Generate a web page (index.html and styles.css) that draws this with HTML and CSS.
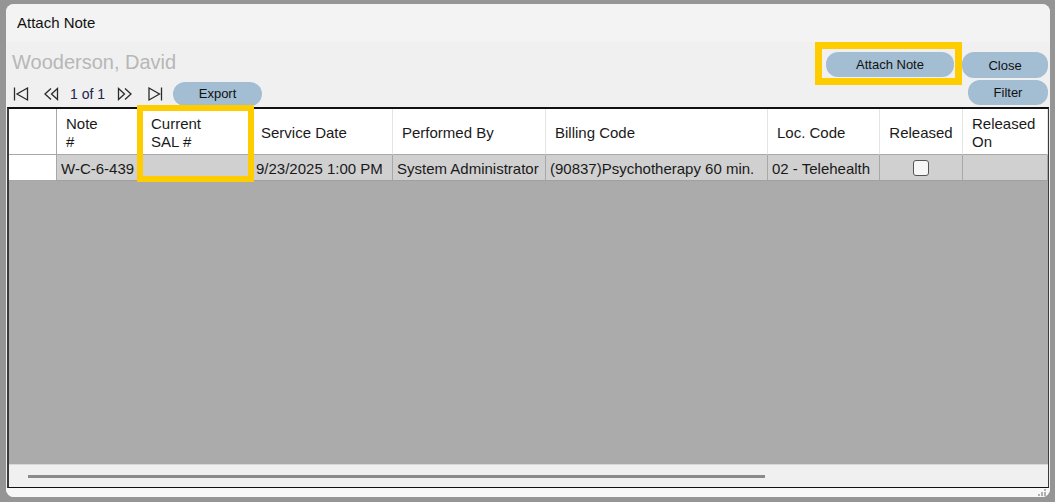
FILE: index.html
```html
<!DOCTYPE html>
<html lang="en">
<head>
	<meta charset="UTF-8">
	<title>Attach Note</title>
	<link rel="stylesheet" href="styles.css">
</head>
<body>
	<div class="window">
		<div class="title-bar">Attach Note</div>
		<div class="top-area">
			<div class="left-col">
				<div class="client-name">Wooderson, David</div>
				<div class="nav-row">
					<svg class="nav-icon" viewBox="0 0 16 16"><path d="M1.5 1.5v13M14.5 2L4 8l10.5 6z"/></svg>
					<svg class="nav-icon icon-prev" viewBox="0 0 16 16"><path d="M14.5 2.5v11L8.5 8zM8 2.5L2 8l6 5.5"/></svg>
					<span class="page-text">1 of 1</span>
					<svg class="nav-icon icon-next" viewBox="0 0 16 16"><path d="M1.5 2.5v11L7.5 8zM8 2.5L14 8l-6 5.5"/></svg>
					<svg class="nav-icon icon-last" viewBox="0 0 16 16"><path d="M14.5 1.5v13M2 2l10.5 6L2 14z"/></svg>
					<button class="blue-button export-button">Export</button>
				</div>
			</div>
			<div class="right-cluster">
				<div class="highlight-box">
					<button class="blue-button attach-button">Attach Note</button>
				</div>
				<div class="side-buttons">
					<button class="blue-button close-button">Close</button>
					<button class="blue-button filter-button">Filter</button>
				</div>
			</div>
		</div>
		<div class="grid-box">
			<div class="grid-table">
				<div class="cell row-head head-row"></div>
				<div class="cell head-cell">Note<br>#</div>
				<div class="cell head-cell sal-head">Current<br>SAL #</div>
				<div class="cell head-cell">Service Date</div>
				<div class="cell head-cell">Performed By</div>
				<div class="cell head-cell">Billing Code</div>
				<div class="cell head-cell">Loc. Code</div>
				<div class="cell head-cell head-center">Released</div>
				<div class="cell head-cell">Released<br>On</div>

				<div class="cell row-head"></div>
				<div class="cell data-cell">W-C-6-439</div>
				<div class="cell data-cell"></div>
				<div class="cell data-cell">9/23/2025 1:00 PM</div>
				<div class="cell data-cell">System Administrator</div>
				<div class="cell data-cell">(90837)Psychotherapy 60 min.</div>
				<div class="cell data-cell">02 - Telehealth</div>
				<div class="cell data-cell data-center"><span class="check-box"></span></div>
				<div class="cell data-cell"></div>
			</div>
			<div class="grid-empty"></div>
			<div class="h-scroll"><div class="h-thumb"></div></div>
			<div class="sal-highlight"></div>
		</div>
		<div class="bottom-strip">
			<svg class="grip" viewBox="0 0 10 8"><path d="M7 1h2v2H7zM4 4h2v2H4zM7 4h2v2H7zM1 6h2v2H1zM4 6h2v2H4zM7 6h2v2H7z"/></svg>
		</div>
	</div>
</body>
</html>
```

FILE: styles.css
```css
* {
	box-sizing: border-box;
}
body {
	margin: 0;
	padding: 4px 5px 5px 6px;
	background-color: #959595;
	font-family: "Liberation Sans", Arial, sans-serif;
	color: #1a1a1a;
}
.window {
	width: 1044px;
	height: 493px;
	background-color: #f0f0f0;
	border-radius: 8px;
	overflow: hidden;
	display: flex;
	flex-direction: column;
}
.title-bar {
	height: 38px;
	line-height: 38px;
	padding-left: 11px;
	background-color: #f3f3f3;
	font-size: 15px;
	color: #111111;
}
.top-area {
	height: 65px;
	display: flex;
	justify-content: space-between;
	padding-right: 2px;
}
.left-col {
	padding-top: 8px;
}
.client-name {
	padding-left: 6px;
	height: 24px;
	line-height: 24px;
	font-size: 20px;
	color: #b7b7b7;
}
.nav-row {
	margin-top: 7px;
	padding-left: 7px;
	display: flex;
	align-items: center;
	height: 25px;
}
.nav-icon {
	width: 16px;
	height: 16px;
	fill: none;
	stroke: #2a2a2a;
	stroke-width: 1.3;
	stroke-linejoin: miter;
}
.icon-prev {
	margin-left: 14px;
}
.page-text {
	margin-left: 11px;
	font-size: 14px;
	color: #22224e;
}
.icon-next {
	margin-left: 12px;
}
.icon-last {
	margin-left: 14px;
}
.blue-button {
	background-color: #a3bdd3;
	border: none;
	border-radius: 12px;
	font-family: "Liberation Sans", Arial, sans-serif;
	font-size: 13px;
	color: #111111;
	padding: 0;
	cursor: default;
}
.export-button {
	margin-left: 10px;
	width: 89px;
	height: 24px;
}
.right-cluster {
	display: flex;
	align-items: flex-start;
}
.highlight-box {
	width: 147px;
	height: 43px;
	border: 7px solid #ffcc00;
	padding: 3px 1px 1px 4px;
}
.attach-button {
	width: 128px;
	height: 25px;
}
.side-buttons {
	display: flex;
	flex-direction: column;
	align-items: flex-end;
	margin-top: 10px;
}
.close-button {
	width: 86px;
	height: 26px;
}
.filter-button {
	margin-top: 2px;
	width: 80px;
	height: 25px;
}
.grid-box {
	position: relative;
	height: 381px;
	margin-left: 1px;
	margin-right: 1px;
	border-top: 2px solid #111111;
	border-left: 2px solid #3a3a3a;
	border-right: 1px solid #3a3a3a;
	border-bottom: 1px solid #111111;
	display: flex;
	flex-direction: column;
	background-color: #ababab;
}
.grid-table {
	display: grid;
	grid-template-columns: 48px 81px 114px 141px 153px 222px 112px 83px 85px;
	grid-template-rows: 46px 26px;
	font-size: 15px;
}
.cell {
	display: flex;
	align-items: center;
	white-space: nowrap;
	overflow: hidden;
	padding-top: 2px;
}
.row-head {
	background-color: #ffffff;
	border-right: 1px solid #a8a8a8;
	border-bottom: 1px solid #a8a8a8;
}
.head-cell {
	background-color: #ffffff;
	padding-left: 9px;
	line-height: 18px;
	border-right: 1px solid #e4e4e4;
	border-bottom: 1px solid #a8a8a8;
}
.head-cell.sal-head {
	padding-left: 13px;
}
.head-center {
	justify-content: center;
	padding-left: 0;
}
.data-cell {
	background-color: #d0d0d0;
	padding-left: 4px;
	border-right: 1px solid #a8a8a8;
	border-bottom: 1px solid #a0a0a0;
}
.data-center {
	justify-content: center;
	padding-left: 0;
	padding-top: 0;
}
.check-box {
	width: 16px;
	height: 16px;
	border: 1px solid #555555;
	border-radius: 3px;
	background-color: #f7f7f7;
}
.grid-empty {
	flex: 1;
}
.h-scroll {
	height: 23px;
	background-color: #f0f0f0;
	border-top: 1px solid #d9d9d9;
	padding: 10px 0 0 19px;
}
.h-thumb {
	width: 737px;
	height: 3px;
	background-color: #8a8a8a;
}
.sal-highlight {
	position: absolute;
	left: 128px;
	top: -4px;
	width: 117px;
	height: 77px;
	border: 6px solid #ffcc00;
}
.bottom-strip {
	flex: 1;
	background-color: #f7f7f7;
	display: flex;
	justify-content: flex-end;
	align-items: flex-end;
	padding: 0 3px 1px 0;
}
.grip {
	width: 10px;
	height: 8px;
	fill: #b0b0b0;
}
```
